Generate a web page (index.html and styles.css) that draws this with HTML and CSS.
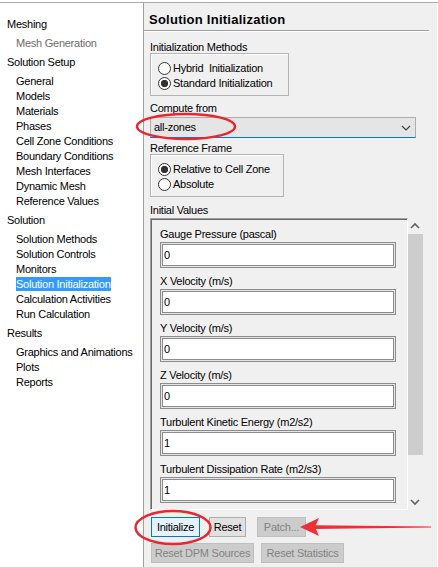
FILE: index.html
```html
<!DOCTYPE html>
<html>
<head>
<meta charset="utf-8">
<link rel="stylesheet" href="styles.css">
</head>
<body>
<div class="app">
  <nav class="tree">
    <div class="grp">
      <div class="hdr">Meshing</div>
      <ul class="items"><li class="dis">Mesh Generation</li></ul>
    </div>
    <div class="grp">
      <div class="hdr">Solution Setup</div>
      <ul class="items">
        <li>General</li><li>Models</li><li>Materials</li><li>Phases</li>
        <li>Cell Zone Conditions</li><li>Boundary Conditions</li><li>Mesh Interfaces</li>
        <li>Dynamic Mesh</li><li>Reference Values</li>
      </ul>
    </div>
    <div class="grp">
      <div class="hdr">Solution</div>
      <ul class="items">
        <li>Solution Methods</li><li>Solution Controls</li><li>Monitors</li>
        <li><span class="sel">Solution Initialization</span></li>
        <li>Calculation Activities</li><li>Run Calculation</li>
      </ul>
    </div>
    <div class="grp">
      <div class="hdr">Results</div>
      <ul class="items"><li>Graphics and Animations</li><li>Plots</li><li>Reports</li></ul>
    </div>
  </nav>
  <main class="panel">
    <div class="title">Solution Initialization</div>
    <div class="content">
      <div class="lbl l1">Initialization Methods</div>
      <div class="gbox g1">
        <div class="radio"><span class="rb"></span>Hybrid&nbsp; Initialization</div>
        <div class="radio"><span class="rb on"></span>Standard Initialization</div>
      </div>
      <div class="lbl l2">Compute from</div>
      <div class="select"><span>all-zones</span>
        <svg class="chev" width="10" height="6" viewBox="0 0 10 6"><polyline points="1,1 5,5 9,1" fill="none" stroke="#404040" stroke-width="1.2"/></svg>
      </div>
      <div class="lbl l3">Reference Frame</div>
      <div class="gbox g2">
        <div class="radio"><span class="rb on"></span>Relative to Cell Zone</div>
        <div class="radio"><span class="rb"></span>Absolute</div>
      </div>
      <div class="lbl l4">Initial Values</div>
      <div class="scroller">
        <div class="viewport">
          <div class="field"><div class="flbl">Gauge Pressure (pascal)</div><div class="inp">0</div></div>
          <div class="field"><div class="flbl">X Velocity (m/s)</div><div class="inp">0</div></div>
          <div class="field"><div class="flbl">Y Velocity (m/s)</div><div class="inp">0</div></div>
          <div class="field"><div class="flbl">Z Velocity (m/s)</div><div class="inp">0</div></div>
          <div class="field"><div class="flbl">Turbulent Kinetic Energy (m2/s2)</div><div class="inp">1</div></div>
          <div class="field"><div class="flbl">Turbulent Dissipation Rate (m2/s3)</div><div class="inp">1</div></div>
        </div>
        <div class="vbar">
          <svg class="arr" width="16" height="16" viewBox="0 0 16 16"><polyline points="3,10 7,6 11,10" fill="none" stroke="#606060" stroke-width="1.6"/></svg>
          <div class="thumb"></div>
          <div class="track"></div>
          <svg class="arr" width="16" height="16" viewBox="0 0 16 16"><polyline points="3,6 7,10 11,6" fill="none" stroke="#606060" stroke-width="1.6"/></svg>
        </div>
      </div>
      <div class="btns r1">
        <div class="btn def b-init">Initialize</div>
        <div class="btn b-reset">Reset</div>
        <div class="btn dis b-patch">Patch...</div>
      </div>
      <div class="btns r2">
        <div class="btn dis b-dpm">Reset DPM Sources</div>
        <div class="btn dis b-stat">Reset Statistics</div>
      </div>
    </div>
  </main>
</div>
<svg class="marks" width="438" height="567" viewBox="0 0 438 567">
  <ellipse cx="186" cy="126.5" rx="49" ry="12.5" fill="none" stroke="#e8282c" stroke-width="2.4"/>
  <ellipse cx="173" cy="527.5" rx="37.5" ry="16.5" fill="none" stroke="#e8282c" stroke-width="2.4"/>
  <polygon points="314,525.3 431,526.6 431,527.6 314,529" fill="#ee3035"/>
  <polygon points="300,527 319,518 315,527 319,536" fill="#ee3035"/>
</svg>
</body>
</html>
```
FILE: styles.css
```css
html, body {
  margin: 0;
  padding: 0;
  background: #ffffff;
}
body {
  font-family: "Liberation Sans", Arial, sans-serif;
  font-size: 11px;
  letter-spacing: -0.25px;
  color: #000;
  width: 438px;
  height: 567px;
  overflow: hidden;
  position: relative;
}
.app {
  margin-top: 2px;
  border-top: 1px solid #a9a9a9;
  height: 564px;
  display: flex;
}
.tree {
  width: 144px;
  box-sizing: border-box;
  border-right: 1px solid #a0a0a0;
  background: #fff;
  padding-top: 14px;
  line-height: 15px;
}
.hdr { padding-left: 7px; }
.grp + .grp { margin-top: 4px; }
.items {
  list-style: none;
  margin: 4px 0 0 0;
  padding: 0;
}
.items li { padding-left: 16px; white-space: nowrap; }
.items li.dis { color: #6d6d6d; }
.sel { background: #3399ff; color: #fff; padding: 1px 0; }

.panel {
  flex: 1;
  background: #f0f0f0;
  border-right: 1px solid #ffffff;
}
.title {
  height: 28px;
  box-sizing: border-box;
  padding: 9px 0 0 5px;
  line-height: 16px;
  font-weight: bold;
  font-size: 13px;
  letter-spacing: 0.25px;
  border-bottom: 1px solid #a0a0a0;
  box-shadow: 0 1px 0 #ffffff;
  margin-right: 8px;
}
.content { padding-left: 6px; }
.lbl { line-height: 12px; white-space: nowrap; }
.l1 { margin-top: 10px; }
.l2 { margin-top: 6px; }
.l3 { margin-top: 4px; }
.l4 { margin-top: 7px; }

.gbox {
  box-sizing: border-box;
  border: 1px solid #b4b4b4;
  box-shadow: inset 1px 1px 0 #ffffff;
  padding: 7px 0 4px 7px;
  line-height: 15px;
}
.g1 { width: 139px; }
.g2 { width: 134px; }
.radio { display: flex; align-items: center; height: 15px; white-space: nowrap; }
.rb {
  width: 13px;
  height: 13px;
  box-sizing: border-box;
  border: 1px solid #333333;
  border-radius: 50%;
  background: #ffffff;
  margin-right: 2px;
  flex: none;
}
.rb.on { background: radial-gradient(circle, #333333 0 3.4px, #ffffff 3.9px); }

.select {
  margin-top: 3px;
  width: 266px;
  height: 21px;
  box-sizing: border-box;
  border: 1px solid #adadad;
  border-bottom-color: #0078d7;
  background: #e5e5e5;
  padding-left: 3px;
  line-height: 19px;
  display: flex;
  justify-content: space-between;
  align-items: center;
}
.chev { margin-right: 4px; }

.scroller {
  margin-top: 2px;
  height: 292px;
  display: flex;
}
.viewport {
  width: 258px;
  height: 292px;
  box-sizing: border-box;
  border-top: 1px solid #a0a0a0;
  border-left: 1px solid #a0a0a0;
  border-right: 1px solid #ffffff;
  border-bottom: 1px solid #ffffff;
  box-shadow: inset 1px 1px 0 #696969;
  padding: 9px 0 0 9px;
  overflow: hidden;
}
.field + .field { margin-top: 7px; }
.flbl { line-height: 12px; white-space: nowrap; }
.inp {
  margin-top: 2px;
  width: 236px;
  height: 26px;
  box-sizing: border-box;
  background: #ffffff;
  border: 1px solid #8c8c8c;
  box-shadow: inset 0 0 0 1px #e6e6e6, inset 0 0 0 2px #8c8c8c;
  padding-left: 3px;
  line-height: 24px;
}
.vbar {
  width: 16px;
  display: flex;
  flex-direction: column;
}
.arr { display: block; flex: none; }
.thumb { height: 221px; width: 15px; background: #cdcdcd; flex: none; }
.track { flex: 1; }

.btns { display: flex; margin-left: 1px; }
.r1 { margin-top: 7px; }
.r2 { margin-top: 6px; }
.btn {
  height: 20px;
  box-sizing: border-box;
  border: 1px solid #adadad;
  background: #e1e1e1;
  line-height: 18px;
  text-align: center;
  white-space: nowrap;
}
.btn.def { border-color: #0078d7; background: #e5f1fb; }
.btn.dis { border-color: #bfbfbf; background: #cccccc; color: #838383; }
.b-init { width: 49px; }
.b-reset { width: 37px; margin-left: 9px; }
.b-patch { width: 49px; margin-left: 11px; }
.b-dpm { width: 103px; }
.b-stat { width: 83px; margin-left: 7px; }

.marks {
  position: absolute;
  left: 0;
  top: 0;
  pointer-events: none;
}
```
